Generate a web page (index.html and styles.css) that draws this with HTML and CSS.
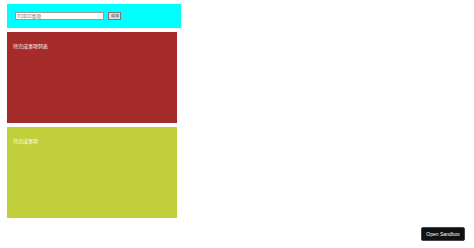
FILE: index.html
```html
<!DOCTYPE html>
<html lang="zh">
<head>
  <meta charset="UTF-8" />
  <meta name="viewport" content="width=device-width, initial-scale=1.0" />
  <title>TODO</title>
  <link rel="stylesheet" href="styles.css">
</head>
<body>
  <!-- 输入区 -->
  <div class="header">
    <input class="todo-input" placeholder="TODO事项" />
    <button class="add-btn">添加</button>
  </div>

  <!-- 未完成 -->
  <div class="panel panel-todo">
    <h2>待完成事项列表</h2>
  </div>

  <!-- 已完成 -->
  <div class="panel panel-done">
    <h2>已完成事项</h2>
  </div>

  <button class="sandbox-btn">Open Sandbox</button>
</body>
</html>
```

FILE: styles.css
```css
body {
  margin: 0;
  padding: 4px 7px;
  background-color: #fff;
  font-family: "Liberation Sans", "Noto Sans CJK SC", sans-serif;
}
.header {
  width: 174px;
  height: 24px;
  background-color: #00ffff;
  display: flex;
  align-items: center;
  gap: 4px;
  padding-left: 8px;
  box-sizing: border-box;
}
.todo-input {
  width: 89px;
  height: 8px;
  box-sizing: border-box;
  margin: 0;
  padding: 0 1px;
  border: 1px solid #999;
  font-size: 5px;
  font-family: inherit;
  background-color: #fff;
}
.todo-input::placeholder {
  color: #777;
}
.add-btn {
  width: 13px;
  height: 8px;
  box-sizing: border-box;
  margin: 0;
  padding: 0;
  border: 1px solid #777;
  background-color: #ddd;
  font-size: 4px;
  line-height: 1;
  color: #222;
}
.panel {
  width: 170px;
  height: 91px;
  margin-top: 4px;
  padding: 11px 6px;
  box-sizing: border-box;
}
.panel h2 {
  margin: 0;
  font-size: 5px;
  font-weight: normal;
  color: #fff;
  line-height: 6px;
}
.panel-todo {
  background-color: #a52a2a;
}
.panel-done {
  background-color: #c0cf3a;
}
.sandbox-btn {
  position: fixed;
  right: 9px;
  bottom: 7px;
  width: 44px;
  height: 14px;
  padding: 0;
  border: 1px solid #444;
  border-radius: 2px;
  background-color: #111;
  color: #fff;
  font-family: inherit;
  font-size: 5px;
}
```
